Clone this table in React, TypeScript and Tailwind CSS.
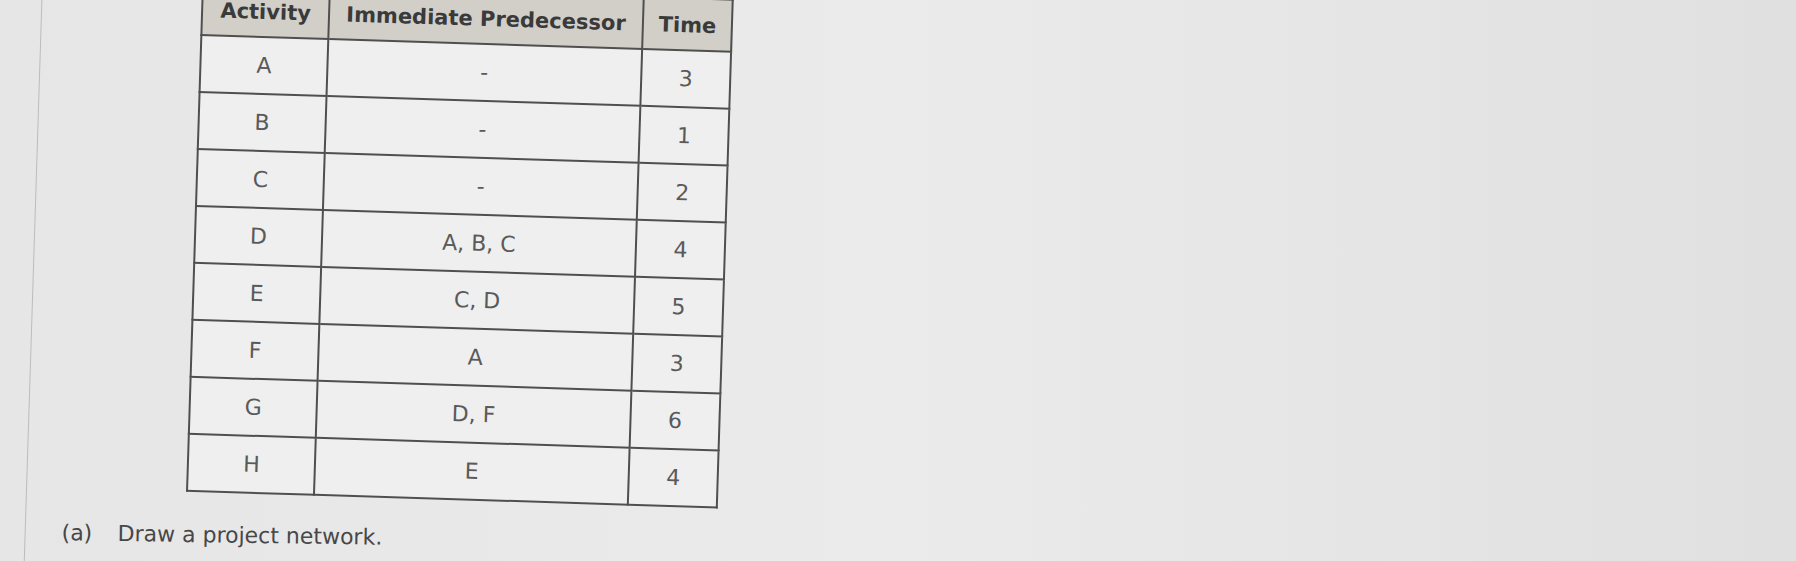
const rows = [
  { activity: 'A', pred: '-', time: '3' },
  { activity: 'B', pred: '-', time: '1' },
  { activity: 'C', pred: '-', time: '2' },
  { activity: 'D', pred: 'A, B, C', time: '4' },
  { activity: 'E', pred: 'C, D', time: '5' },
  { activity: 'F', pred: 'A', time: '3' },
  { activity: 'G', pred: 'D, F', time: '6' },
  { activity: 'H', pred: 'E', time: '4' },
]

export default function App() {
  return (
    <div className="h-[561px] w-[1796px] overflow-hidden bg-linear-to-r from-[#e6e6e6] via-[#ebebeb] to-[#e1e0e1] font-['DejaVu_Sans',Verdana,sans-serif]">
      {/* photo is tilted a little */}
      <div className="flex h-[561px] w-[1796px] rotate-[1.8deg]">
        <div className="w-[33px] shrink-0" />
        <div className="-my-[40px] flex-1 border-l border-[#bcbcbc] py-[40px]">
          <div className="pl-[159px] pt-[4px]">
            <table className="table-fixed border-collapse border-2 border-[#4f4f4f] bg-[#efefef]">
              <thead>
                <tr className="h-[52px] bg-[#d1cfc8] text-[21px] font-bold text-[#3a3a3a]">
                  <th className="w-[127px] border-2 border-[#4f4f4f] pt-1 text-center">Activity</th>
                  <th className="w-[314px] border-2 border-[#4f4f4f] pt-1 text-center">Immediate Predecessor</th>
                  <th className="w-[89px] border-2 border-[#4f4f4f] pt-1 text-center">Time</th>
                </tr>
              </thead>
              <tbody>
                {rows.map(row => (
                  <tr key={row.activity} className="h-[57px] text-[22px] text-[#5a5a5a]">
                    <td className="border-2 border-[#4f4f4f] text-center">{row.activity}</td>
                    <td className="border-2 border-[#4f4f4f] text-center">{row.pred}</td>
                    <td className="border-2 border-[#4f4f4f] text-center">{row.time}</td>
                  </tr>
                ))}
              </tbody>
            </table>
          </div>
          <p className="mt-[29px] origin-left -rotate-1 pl-[36px] text-[22px] text-[#474747]">
            <span className="inline-block w-[56px]">(a)</span>
            Draw a project network.
          </p>
        </div>
      </div>
    </div>
  )
}
